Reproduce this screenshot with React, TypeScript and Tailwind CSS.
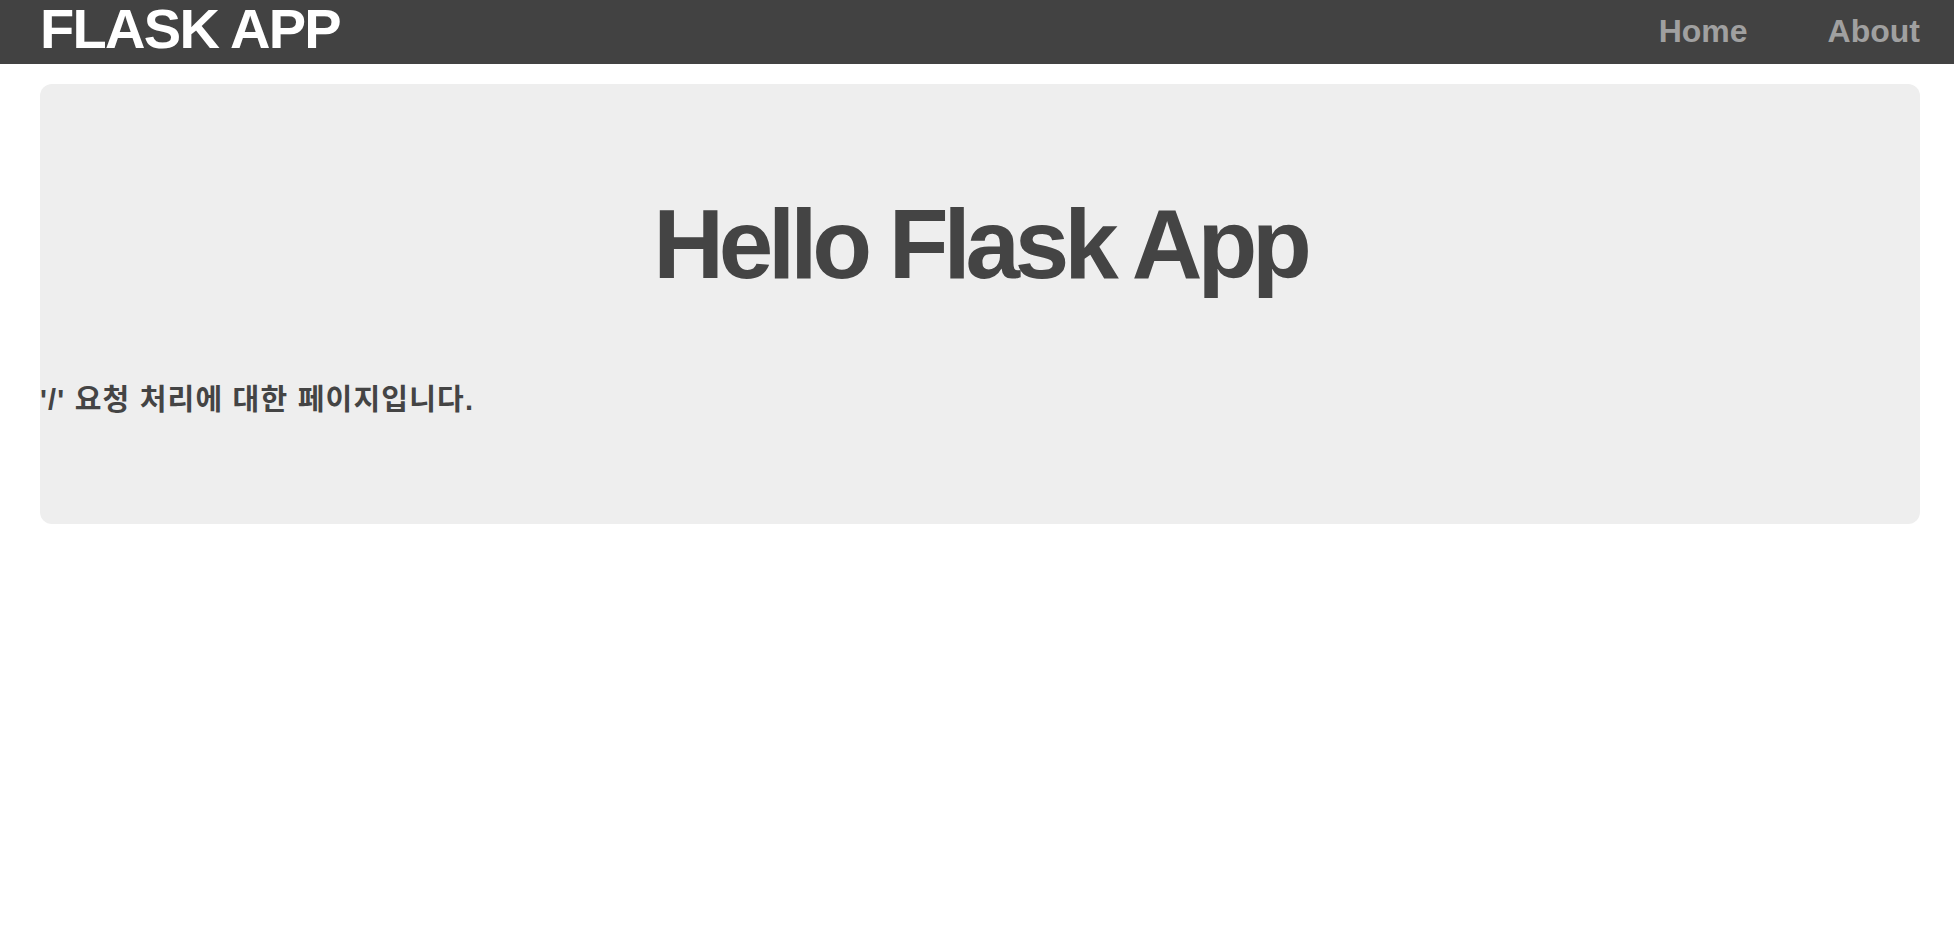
export default function App() {
  return (
    <div className="min-h-screen bg-white font-['Liberation_Sans','Noto_Sans_CJK_KR',sans-serif]">
      <header className="flex h-16 items-center justify-between bg-[#424242] pl-10 pr-[34px]">
        <h1 className="pb-[7px] text-[56px] font-bold leading-[56px] tracking-[-1.7px] text-white">FLASK APP</h1>
        <nav className="flex gap-20 pb-[2px] text-[32px] font-bold leading-[32px] text-[#a0a0a0]">
          <a href="#">Home</a>
          <a href="#">About</a>
        </nav>
      </header>

      <main className="pl-10 pr-[34px] pt-5">
        <section className="rounded-xl bg-[#eeeeee] pb-[110px] pt-[111px] text-[#444444]">
          <h2 className="text-center text-[98px] font-bold leading-[98px] tracking-[-5.2px]">Hello Flask App</h2>
          <p className="mt-[93px] text-[29px] font-bold leading-[28px] tracking-[1.2px]">'/' 요청 처리에 대한 페이지입니다.</p>
        </section>
      </main>
    </div>
  );
}
